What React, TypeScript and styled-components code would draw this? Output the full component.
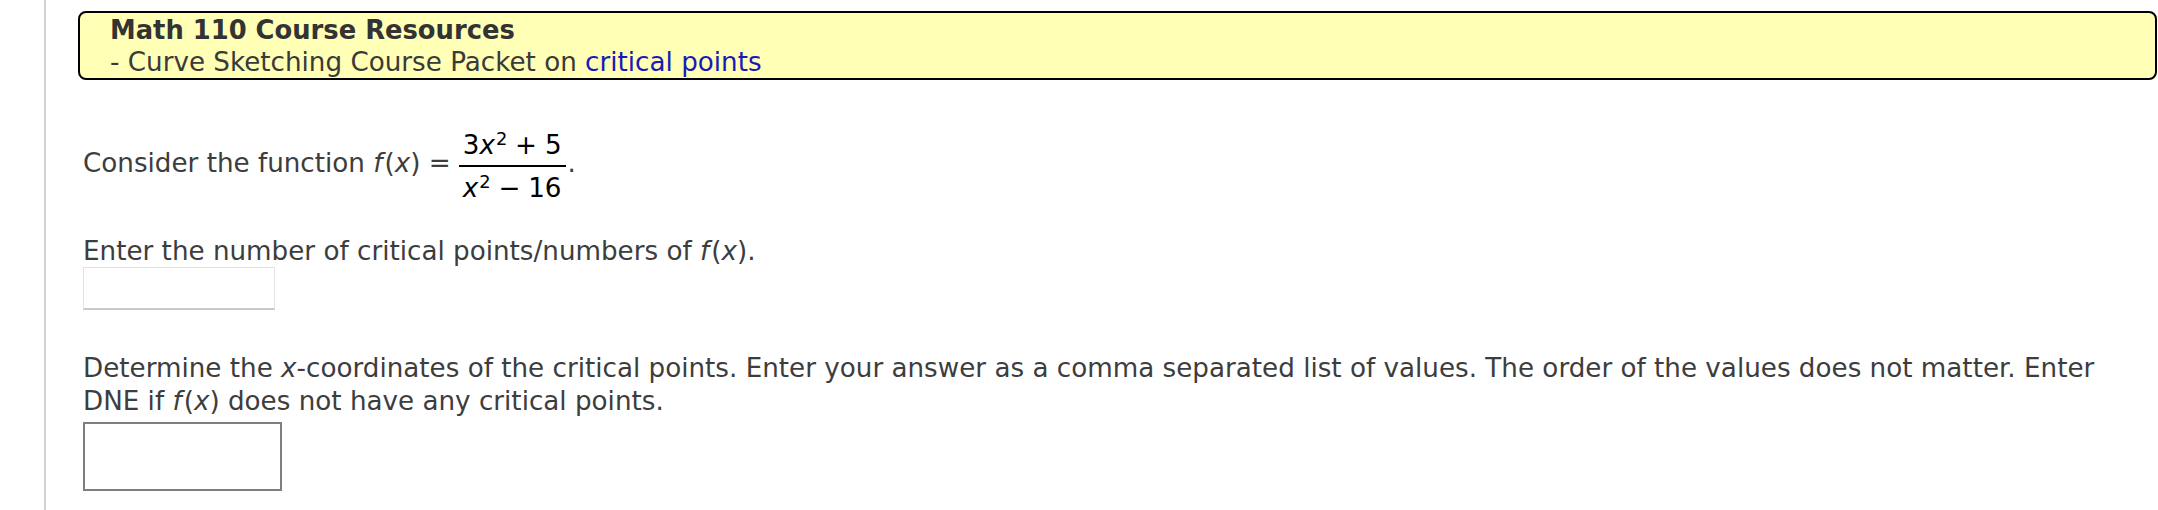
import styled, { createGlobalStyle } from 'styled-components';

const GlobalStyle = createGlobalStyle`
  html, body {
    margin: 0;
    padding: 0;
    background: #fff;
  }
  body {
    font-family: "DejaVu Sans", Verdana, sans-serif;
    color: #3d3d3d;
  }
`;

const Page = styled.div`
  display: flex;
  min-height: 510px;
`;

const Rail = styled.div`
  width: 44px;
  flex-shrink: 0;
  border-right: 2px solid #d2d2d2;
`;

const Main = styled.main`
  flex: 1;
  padding: 11px 1px 0 32px;
`;

const ResourceBox = styled.div`
  border: 2px solid #000;
  border-radius: 8px;
  background-color: #ffffb5;
  padding: 1px 20px 0 30px;
  line-height: 32px;
`;

const ResourceTitle = styled.div`
  font-size: 25.8px;
  font-weight: bold;
  color: #333;
`;

const ResourceLine = styled.div`
  font-size: 26.2px;
  color: #3a3a3a;

  a {
    color: #1a1ab8;
    text-decoration: none;
  }
`;

const Question = styled.div`
  padding: 0 20px 0 5px;
  font-size: 26.2px;
`;

const Prompt = styled.p<{ $gap: number; $lh?: number }>`
  margin: ${(p) => p.$gap}px 0 0;
  line-height: ${(p) => p.$lh ?? 33}px;
`;

const Var = styled.i<{ $kern?: boolean }>`
  font-style: italic;
  margin-right: ${(p) => (p.$kern ? '2px' : '0')};
`;

const Fraction = styled.span`
  display: inline-flex;
  flex-direction: column;
  align-items: stretch;
  vertical-align: 18px;
  margin: 0 2px 0 8px;
  color: #000;
  line-height: 30.6px;
`;

const Numerator = styled.span`
  padding: 0 4px 4.5px;
  text-align: center;
  border-bottom: 2px solid #000;
`;

const Denominator = styled.span`
  padding: 6px 4px 0;
  text-align: center;
`;

const Sup = styled.sup`
  font-size: 0.68em;
  line-height: 0;
  vertical-align: 0.5em;
  margin-left: 1px;
`;

const Op = styled.span`
  margin: 0 0.3em;
`;

const AnswerBox = styled.input<{ $w: number; $h: number; $strong?: boolean }>`
  display: block;
  box-sizing: border-box;
  width: ${(p) => p.$w}px;
  height: ${(p) => p.$h}px;
  margin: ${(p) => (p.$strong ? '4px' : '0')} 0 0;
  padding: 0 6px;
  background: #fff;
  font: inherit;
  outline: none;
  border: ${(p) => (p.$strong ? '2px solid #7f7f7f' : '1px solid #e2e2e2')};
  border-bottom: ${(p) => (p.$strong ? '2px solid #7f7f7f' : '2px solid #c9c9c9')};
`;

const Fx = () => (
  <>
    <Var $kern>f</Var>(<Var>x</Var>)
  </>
);

const App = () => {
  return (
    <>
      <GlobalStyle />
      <Page>
        <Rail />
        <Main>
          <ResourceBox>
            <ResourceTitle>Math 110 Course Resources</ResourceTitle>
            <ResourceLine>
              - Curve Sketching Course Packet on <a href="#critical">critical points</a>
            </ResourceLine>
          </ResourceBox>

          <Question>
            <Prompt $gap={50}>
              Consider the function <Fx /> =
              <Fraction>
                <Numerator>
                  3<Var>x</Var>
                  <Sup>2</Sup>
                  <Op>+</Op>5
                </Numerator>
                <Denominator>
                  <Var>x</Var>
                  <Sup>2</Sup>
                  <Op>−</Op>16
                </Denominator>
              </Fraction>
              .
            </Prompt>

            <Prompt $gap={32} $lh={31}>
              Enter the number of critical points/numbers of <Fx />.
            </Prompt>
            <AnswerBox $w={192} $h={43} aria-label="number of critical points" />

            <Prompt $gap={42}>
              Determine the <Var>x</Var>-coordinates of the critical points. Enter your answer as a comma
              separated list of values. The order of the values does not matter. Enter DNE if <Fx /> does
              not have any critical points.
            </Prompt>
            <AnswerBox $w={199} $h={69} $strong aria-label="critical points" />
          </Question>
        </Main>
      </Page>
    </>
  );
};

export default App;
